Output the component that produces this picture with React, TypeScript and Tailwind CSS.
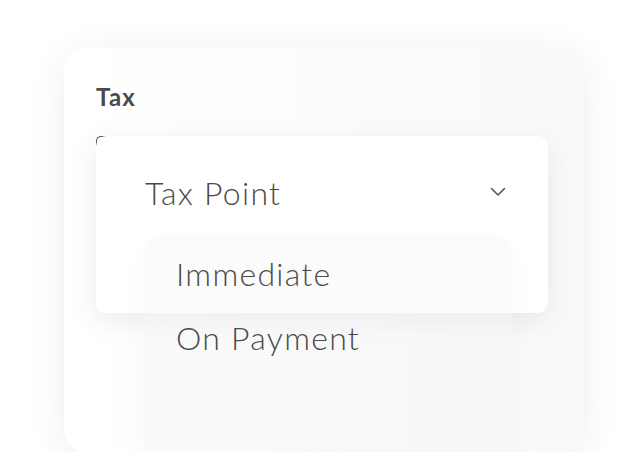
import React from "react";

const items = ["Immediate", "On Payment"];

const Chevron: React.FC = () => (
  <svg width="16" height="10" viewBox="0 0 16 10" fill="none" className="mt-[10px]">
    <path d="M1.5 1.5L8 8L14.5 1.5" stroke="#555" strokeWidth="1.6" strokeLinecap="round" strokeLinejoin="round" />
  </svg>
);

export default function App() {
  return (
    <div
      className="w-[631px] h-[452px] overflow-hidden bg-white pt-12 pl-16"
      style={{ fontFamily: "Lato, 'Noto Sans', sans-serif" }}
    >
      <div className="w-[520px] h-[404px] rounded-[24px] bg-linear-to-r from-white to-[#f9f9f9] shadow-[0_6px_40px_rgba(0,0,0,0.07)] pt-[37px] pl-8 pr-9">
        <div className="text-[24px] leading-none font-bold tracking-[0.05em] text-[#4a4a4a]">Tax</div>

        <div className="relative mt-[27px]">
          {/* input border peeking out behind the panel */}
          <div className="absolute left-0 top-0 w-4 h-4 rounded-tl-[5px] border-l border-t border-[#555]" />

          <div className="relative h-[177px] rounded-[10px] bg-white shadow-[0_8px_30px_rgba(0,0,0,0.08)] flex items-start justify-between pl-[49px] pr-[42px] pt-[41px]">
            <span className="text-[32px] leading-none font-light tracking-[0.04em] text-[#4a4a4a]">Tax Point</span>
            <Chevron />
          </div>

          <div className="absolute left-12 top-[98px] w-[368px] h-[240px] rounded-[20px] bg-[#f5f5f5]/40 shadow-[0_10px_30px_rgba(0,0,0,0.025)] flex flex-col gap-8 pl-8 pt-6">
            {items.map((label) => (
              <span key={label} className="text-[32px] leading-none font-light tracking-[0.04em] text-[#4a4a4a]">
                {label}
              </span>
            ))}
          </div>
        </div>
      </div>
    </div>
  );
}
